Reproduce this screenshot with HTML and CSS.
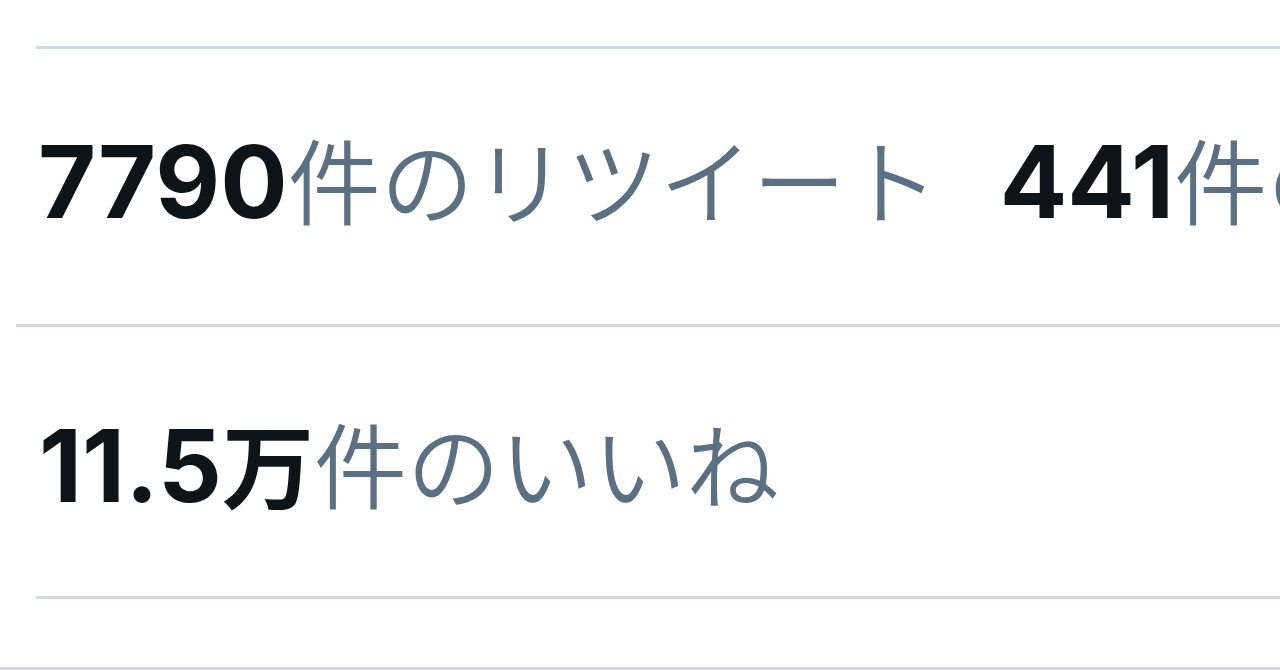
FILE: index.html
```html
<!DOCTYPE html>
<html lang="ja">
<head>
<meta charset="utf-8">
<link rel="stylesheet" href="styles.css">
</head>
<body>
<div class="stats">
  <div class="row row-retweets">
    <span class="stat"><b class="num">7790</b><span class="label">件のリツイート</span></span>
    <span class="stat"><b class="num">441</b><span class="label">件の引用ツイート</span></span>
  </div>
  <div class="row row-likes">
    <span class="stat"><b class="num">11.5<span class="unit">万</span></b><span class="label">件のいいね</span></span>
  </div>
  <div class="row row-end"></div>
</div>
</body>
</html>
```
FILE: styles.css
```css
html, body {
  margin: 0;
  padding: 0;
  background: #ffffff;
  overflow: hidden;
}
.stats {
  width: 1280px;
  height: 670px;
  padding-top: 46px;
  box-sizing: border-box;
  display: flex;
  flex-direction: column;
  border-bottom: 3px solid #d6d8db;
}
.row {
  border-top: 3px solid #d3dbe1;
  display: flex;
  align-items: center;
  white-space: nowrap;
  overflow: hidden;
  gap: 61px;
  box-sizing: border-box;
}
.row-retweets {
  margin-left: 36px;
  height: 278px;
  padding-left: 2px;
  padding-bottom: 18px;
}
.row-likes {
  margin-left: 16px;
  height: 272px;
  padding-left: 23px;
  padding-bottom: 0;
}
.row-end {
  margin-left: 36px;
  flex: 1;
}
.stat {
  display: inline-flex;
  align-items: baseline;
}
.num {
  font-family: "Inter", "Noto Sans CJK JP", sans-serif;
  font-weight: 700;
  font-size: 100px;
  color: #0f1419;
}
.unit {
  font-family: "Noto Sans CJK JP", sans-serif;
  font-size: 92px;
}
.label {
  font-family: "Noto Sans CJK JP", sans-serif;
  font-weight: 350;
  font-size: 93px;
  color: #5b7083;
}
```
